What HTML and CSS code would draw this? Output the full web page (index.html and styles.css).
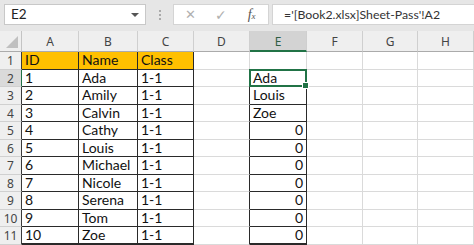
FILE: index.html
```html
<!DOCTYPE html>
<html>
<head lang="en">
    <meta charset="UTF-8">
    <title>Sheet</title>
    <link rel="stylesheet" href="styles.css">
</head>
<body>
<div id="bar">
    <div class="namebox">E2<span class="drop"></span></div>
    <div class="dots"><i></i><i></i><i></i></div>
    <div class="btns">
        <span class="cancel">&#x2715;</span>
        <span class="enter">&#x2713;</span>
        <span class="fx">f<sub>x</sub></span>
    </div>
    <div class="formula">='[Book2.xlsx]Sheet-Pass'!A2</div>
</div>
<div id="sheet">
    <div class="row head">
        <div class="c corner"></div>
        <div class="c h">A</div>
        <div class="c h">B</div>
        <div class="c h">C</div>
        <div class="c h">D</div>
        <div class="c h sel">E</div>
        <div class="c h">F</div>
        <div class="c h">G</div>
        <div class="c h">H</div>
    </div>
    <div class="row">
        <div class="c n">1</div>
        <div class="c t o">ID</div>
        <div class="c t o">Name</div>
        <div class="c t o">Class</div>
        <div class="c"></div>
        <div class="c"></div>
        <div class="c"></div>
        <div class="c"></div>
        <div class="c"></div>
    </div>
    <div class="row">
        <div class="c n nsel">2</div>
        <div class="c t">1</div>
        <div class="c t">Ada</div>
        <div class="c t">1-1</div>
        <div class="c"></div>
        <div class="c active">Ada</div>
        <div class="c"></div>
        <div class="c"></div>
        <div class="c"></div>
    </div>
    <div class="row">
        <div class="c n">3</div>
        <div class="c t">2</div>
        <div class="c t">Amily</div>
        <div class="c t">1-1</div>
        <div class="c l"></div>
        <div class="c t">Louis</div>
        <div class="c"></div>
        <div class="c"></div>
        <div class="c"></div>
    </div>
    <div class="row">
        <div class="c n">4</div>
        <div class="c t">3</div>
        <div class="c t">Calvin</div>
        <div class="c t">1-1</div>
        <div class="c l"></div>
        <div class="c t">Zoe</div>
        <div class="c"></div>
        <div class="c"></div>
        <div class="c"></div>
    </div>
    <div class="row">
        <div class="c n">5</div>
        <div class="c t">4</div>
        <div class="c t">Cathy</div>
        <div class="c t">1-1</div>
        <div class="c l"></div>
        <div class="c t num">0</div>
        <div class="c"></div>
        <div class="c"></div>
        <div class="c"></div>
    </div>
    <div class="row">
        <div class="c n">6</div>
        <div class="c t">5</div>
        <div class="c t">Louis</div>
        <div class="c t">1-1</div>
        <div class="c l"></div>
        <div class="c t num">0</div>
        <div class="c"></div>
        <div class="c"></div>
        <div class="c"></div>
    </div>
    <div class="row">
        <div class="c n">7</div>
        <div class="c t">6</div>
        <div class="c t">Michael</div>
        <div class="c t">1-1</div>
        <div class="c l"></div>
        <div class="c t num">0</div>
        <div class="c"></div>
        <div class="c"></div>
        <div class="c"></div>
    </div>
    <div class="row">
        <div class="c n">8</div>
        <div class="c t">7</div>
        <div class="c t">Nicole</div>
        <div class="c t">1-1</div>
        <div class="c l"></div>
        <div class="c t num">0</div>
        <div class="c"></div>
        <div class="c"></div>
        <div class="c"></div>
    </div>
    <div class="row">
        <div class="c n">9</div>
        <div class="c t">8</div>
        <div class="c t">Serena</div>
        <div class="c t">1-1</div>
        <div class="c l"></div>
        <div class="c t num">0</div>
        <div class="c"></div>
        <div class="c"></div>
        <div class="c"></div>
    </div>
    <div class="row">
        <div class="c n">10</div>
        <div class="c t">9</div>
        <div class="c t">Tom</div>
        <div class="c t">1-1</div>
        <div class="c l"></div>
        <div class="c t num">0</div>
        <div class="c"></div>
        <div class="c"></div>
        <div class="c"></div>
    </div>
    <div class="row last">
        <div class="c n">11</div>
        <div class="c t">10</div>
        <div class="c t">Zoe</div>
        <div class="c t">1-1</div>
        <div class="c l"></div>
        <div class="c t num">0</div>
        <div class="c"></div>
        <div class="c"></div>
        <div class="c"></div>
    </div>
</div>
</body>
</html>
```

FILE: styles.css
```css
*{
    margin: 0;
    padding: 0;
    box-sizing: border-box;
}
body{
    width: 474px;
    height: 245px;
    overflow: hidden;
    background: #fff;
    font-family: "Lato", "Liberation Sans", sans-serif;
}

/* formula bar */
#bar{
    height: 31px;
    background: #e6e6e6;
    display: flex;
    align-items: flex-start;
    padding: 4px 0 0 4px;
    color: #222;
}
.namebox{
    width: 142px;
    height: 21px;
    background: #fff;
    border: 1px solid #c8c8c8;
    font-size: 13.5px;
    line-height: 19px;
    padding-left: 6px;
    position: relative;
}
.drop{
    position: absolute;
    right: 6px;
    top: 8px;
    border-left: 4px solid transparent;
    border-right: 4px solid transparent;
    border-top: 4px solid #555;
}
.dots{
    width: 27px;
    height: 21px;
    display: flex;
    flex-direction: column;
    align-items: center;
    justify-content: center;
    gap: 2px;
}
.dots i{
    width: 2px;
    height: 2px;
    background: #aaa;
}
.btns{
    width: 96px;
    height: 21px;
    background: #fff;
    border: 1px solid #d4d4d4;
    display: flex;
    align-items: center;
    color: #b0b0b0;
    font-family: "DejaVu Sans", sans-serif;
}
.cancel{
    font-size: 13px;
    margin-left: 11px;
}
.enter{
    font-size: 14px;
    margin-left: 19px;
}
.fx{
    font-family: "Liberation Serif", serif;
    font-style: italic;
    font-size: 14px;
    color: #555;
    margin-left: 21px;
}
.fx sub{
    font-size: 9px;
    vertical-align: 0;
}
.formula{
    flex: 1;
    height: 21px;
    margin-left: 3px;
    background: #fff;
    border: 1px solid #d4d4d4;
    border-right: 0;
    font-size: 12.3px;
    line-height: 19px;
    padding-left: 11px;
    color: #333;
}

/* grid */
.row{
    display: grid;
    grid-template-columns: 22px 57px 59px 56px 56px 57px 56px 55px 56px;
    height: 17.5px;
}
.row.head{
    height: 21px;
    background: #efefef;
}
.c{
    border-right: 1px solid #dadada;
    border-bottom: 1px solid #dadada;
    font-size: 14px;
    line-height: 16px;
    padding: 0 3px;
    color: #111;
    white-space: nowrap;
    overflow: hidden;
}
.corner{
    position: relative;
    border-right: 1px solid #c4c4c4;
    border-bottom: 1px solid #ababab;
}
.corner:after{
    content: "";
    position: absolute;
    right: 3px;
    bottom: 3px;
    border-left: 12px solid transparent;
    border-bottom: 12px solid #c0c0c0;
}
.h{
    text-align: center;
    font-family: "Noto Sans", sans-serif;
    font-size: 12px;
    line-height: 21px;
    color: #444;
    border-right: 1px solid #cfcfcf;
    border-bottom: 1px solid #ababab;
}
.h.sel{
    background: #d3d3d3;
    border-bottom: 2px solid #217346;
    color: #2e5e44;
}
.n{
    background: #efefef;
    text-align: center;
    padding: 0;
    font-family: "Noto Sans", sans-serif;
    font-size: 12px;
    line-height: 17px;
    color: #444;
    border-bottom: 1px solid #d0d0d0;
    border-right: 1px solid #3a3a3a;
}
.n.nsel{
    background: #dadada;
    border-right: 1px solid #217346;
}
.t{
    border-right: 1px solid #2a2a2a;
    border-bottom: 1px solid #2a2a2a;
}
.o{
    background: #ffc000;
}
.l{
    border-right: 1px solid #2a2a2a;
}
.num{
    text-align: right;
}
.last .t{
    border-bottom: 2px solid #2a2a2a;
}
.active{
    position: relative;
    overflow: visible;
}
.active:after{
    content: "";
    position: absolute;
    left: -1px;
    top: -1px;
    right: -1px;
    bottom: -1px;
    border: 2px solid #217346;
}
.active:before{
    content: "";
    position: absolute;
    right: -3px;
    bottom: -3px;
    width: 5px;
    height: 5px;
    background: #217346;
    border: 1px solid #fff;
    z-index: 1;
}
```
